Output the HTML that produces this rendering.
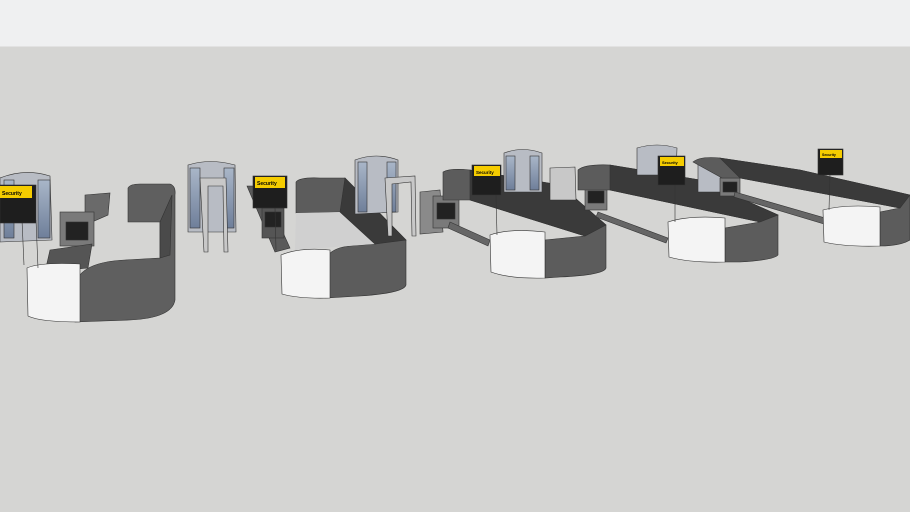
<!DOCTYPE html>
<html><head><meta charset="utf-8"><style>
html,body{margin:0;padding:0;width:910px;height:512px;overflow:hidden;background:#d5d5d3;font-family:"Liberation Sans",sans-serif}
.top{position:absolute;left:0;top:0;width:910px;height:46px;background:#eff0f1;border-bottom:1px solid #e2e2e2}
svg{position:absolute;left:0;top:0}
</style></head><body>
<div class="top"></div>
<svg width="910" height="512" viewBox="0 0 910 512">
<defs>
<linearGradient id="g" x1="0" x2="0" y1="0" y2="1"><stop offset="0" stop-color="#a9b6c8"/><stop offset="1" stop-color="#6f7f9a"/></linearGradient>
</defs>
<g stroke="#333" stroke-width="0.6">
<!-- Unit 1 -->
<path d="M0 178 Q25 168 50 176 L52 240 L0 242 Z" fill="#b8bcc4"/>
<rect x="4" y="180" width="10" height="58" fill="url(#g)"/><rect x="38" y="180" width="12" height="58" fill="url(#g)"/>
<path d="M85 195 L110 193 L108 215 L85 225 Z" fill="#6a6a6a"/>
<rect x="60" y="212" width="34" height="34" fill="#7a7a7a"/><rect x="66" y="222" width="22" height="18" fill="#222"/>
<path d="M50 250 L92 244 L88 268 L45 272 Z" fill="#555"/>
<path d="M128 188 Q130 184 140 184 L170 184 Q176 186 175 195 L175 300 Q172 318 130 320 L75 322 L75 285 Q80 262 125 260 L160 258 L160 222 L128 222 Z" fill="#5f5f5f"/>
<path d="M160 222 L160 258 L170 255 L172 195 Z" fill="#4a4a4a"/>
<path d="M27 268 Q40 262 80 264 L80 322 Q40 322 28 316 Z" fill="#f4f4f4"/>
<line x1="22" y1="220" x2="24" y2="265"/><line x1="36" y1="220" x2="38" y2="268"/>
<rect x="0" y="185" width="36" height="38" fill="#1e1e1e"/><rect x="0" y="186" width="32" height="12" fill="#f5cc00" stroke="none"/>
<text x="2" y="195" font-size="5" font-weight="bold" fill="#000" stroke="none">Security</text>
<!-- Gate 2 -->
<path d="M188 165 Q210 158 235 165 L236 232 L188 232 Z" fill="#b8bcc4"/>
<rect x="190" y="168" width="10" height="60" fill="url(#g)"/><rect x="224" y="168" width="10" height="60" fill="url(#g)"/>
<path d="M200 178 L226 178 L228 252 L224 252 L223 186 L208 186 L208 252 L204 252 Z" fill="#c8c8c8"/>
<!-- Unit 2 -->
<path d="M247 186 L262 186 L290 248 L275 252 Z" fill="#5a5a5a"/>
<path d="M296 182 Q300 177 320 178 L345 178 L406 240 L406 285 Q404 293 360 296 L325 298 L325 260 Q330 248 350 246 L375 244 L340 212 L296 213 Z" fill="#5c5c5c"/>
<path d="M340 212 L375 244 L295 250 L296 213 Z" fill="#d0d0d0" stroke="none"/>
<path d="M345 178 L406 240 L375 244 L340 212 Z" fill="#3a3a3a"/>
<path d="M281 255 Q300 247 330 250 L330 298 Q300 299 282 294 Z" fill="#f4f4f4"/>
<rect x="262" y="208" width="22" height="30" fill="#555"/><rect x="265" y="212" width="16" height="15" fill="#222"/>
<line x1="275" y1="208" x2="276" y2="250"/>
<rect x="253" y="176" width="34" height="32" fill="#1e1e1e"/><rect x="255" y="177" width="30" height="11" fill="#f5cc00" stroke="none"/>
<text x="257" y="185" font-size="5" font-weight="bold" fill="#000" stroke="none">Security</text>
<!-- Gate 3 -->
<path d="M355 160 Q376 152 398 160 L398 212 L355 214 Z" fill="#b8bcc4"/>
<rect x="358" y="162" width="9" height="50" fill="url(#g)"/><rect x="387" y="162" width="9" height="50" fill="url(#g)"/>
<path d="M385 178 L415 176 L416 236 L412 236 L411 182 L392 184 L392 236 L388 236 Z" fill="#c8c8c8"/>
<!-- Unit 3 -->
<path d="M420 192 L440 190 L443 232 L420 234 Z" fill="#8a8a8a"/>
<rect x="433" y="196" width="26" height="32" fill="#7a7a7a"/><rect x="437" y="203" width="18" height="16" fill="#222"/>
<path d="M450 222 L490 240 L488 246 L448 228 Z" fill="#666"/>
<path d="M443 172 Q450 168 470 170 L560 185 L606 225 L606 268 Q604 275 560 277 L545 278 L545 240 L585 236 L470 200 L443 200 Z" fill="#5c5c5c"/>
<path d="M470 170 L560 185 L606 225 L585 236 L470 200 Z" fill="#3a3a3a"/>
<path d="M490 235 Q510 228 545 232 L545 278 Q510 279 491 272 Z" fill="#f4f4f4"/>
<line x1="496" y1="195" x2="497" y2="235"/>
<rect x="472" y="165" width="29" height="30" fill="#1e1e1e"/><rect x="474" y="166" width="26" height="10" fill="#f5cc00" stroke="none"/>
<text x="476" y="174" font-size="4.5" font-weight="bold" fill="#000" stroke="none">Security</text>
<!-- Gate 4 -->
<path d="M504 153 Q523 146 542 153 L542 192 L504 192 Z" fill="#b8bcc4"/>
<rect x="506" y="156" width="9" height="34" fill="url(#g)"/><rect x="530" y="156" width="9" height="34" fill="url(#g)"/>
<path d="M550 168 L575 167 L576 200 L550 200 Z" fill="#c8c8c8"/>
<!-- Unit 4 -->
<rect x="585" y="186" width="22" height="24" fill="#7a7a7a"/><rect x="588" y="191" width="16" height="12" fill="#222"/>
<path d="M598 212 L668 238 L666 243 L596 217 Z" fill="#666"/>
<path d="M578 170 Q585 164 610 165 L700 180 L778 215 L778 255 Q774 260 740 262 L725 262 L725 228 L760 222 L610 190 L578 190 Z" fill="#5c5c5c"/>
<path d="M610 165 L700 180 L778 215 L760 222 L610 190 Z" fill="#3a3a3a"/>
<path d="M668 222 Q690 215 725 218 L725 262 Q690 263 669 257 Z" fill="#f4f4f4"/>
<line x1="675" y1="184" x2="675" y2="222"/>
<path d="M637 148 Q657 142 677 148 L676 175 L637 175 Z" fill="#b8bcc4"/>
<rect x="658" y="156" width="27" height="29" fill="#1e1e1e"/><rect x="660" y="157" width="24" height="9" fill="#f5cc00" stroke="none"/>
<text x="662" y="164" font-size="4" font-weight="bold" fill="#000" stroke="none">Security</text>
<!-- Unit 5 -->
<path d="M698 162 L720 160 L721 192 L698 192 Z" fill="#b8bcc4"/>
<rect x="720" y="178" width="20" height="18" fill="#7a7a7a"/><rect x="723" y="182" width="14" height="10" fill="#222"/>
<path d="M735 192 L825 218 L824 224 L734 197 Z" fill="#666"/>
<path d="M693 162 Q700 156 720 158 L800 170 L910 195 L910 240 Q900 246 880 246 L880 212 L900 208 L740 178 L722 178 Z" fill="#5c5c5c"/>
<path d="M720 158 L800 170 L910 195 L900 208 L740 178 Z" fill="#3a3a3a"/>
<path d="M823 210 Q845 204 880 207 L880 246 Q845 247 824 242 Z" fill="#f4f4f4"/>
<line x1="830" y1="173" x2="829" y2="210"/>
<rect x="818" y="149" width="25" height="26" fill="#1e1e1e"/><rect x="820" y="150" width="22" height="8" fill="#f5cc00" stroke="none"/>
<text x="822" y="156" font-size="3.5" font-weight="bold" fill="#000" stroke="none">Security</text>
</g>
</svg>
</body></html>
